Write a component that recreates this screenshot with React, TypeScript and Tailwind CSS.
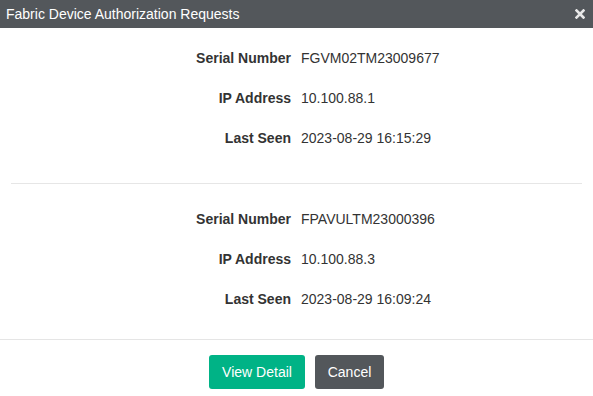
import React from 'react';

type Device = {
  serial: string;
  ip: string;
  lastSeen: string;
};

const devices: Device[] = [
  { serial: 'FGVM02TM23009677', ip: '10.100.88.1', lastSeen: '2023-08-29 16:15:29' },
  { serial: 'FPAVULTM23000396', ip: '10.100.88.3', lastSeen: '2023-08-29 16:09:24' },
];

function Row({ label, value }: { label: string; value: string }) {
  return (
    <div className="flex h-10 items-center">
      <div className="w-[291px] text-right font-bold text-[14px] text-[#333]">{label}</div>
      <div className="pl-[10px] text-[14px] text-[#333]">{value}</div>
    </div>
  );
}

export default function App() {
  return (
    <div
      className="flex h-[396px] w-[593px] flex-col bg-white"
      style={{ fontFamily: '"Liberation Sans", Arial, sans-serif' }}
    >
      <div className="flex h-[28px] shrink-0 items-center justify-between bg-[#53575b] pl-[6px] pr-[8px] text-white">
        <span className="text-[14px]">Fabric Device Authorization Requests</span>
        <svg width="10" height="10" viewBox="0 0 10 10">
          <path d="M1.5 1.5 L8.5 8.5 M8.5 1.5 L1.5 8.5" stroke="#e8e8e8" strokeWidth="2.6" strokeLinecap="square" />
        </svg>
      </div>

      <div className="flex-1">
        <div className="pt-[10px] pb-[25px]">
          <Row label="Serial Number" value={devices[0].serial} />
          <Row label="IP Address" value={devices[0].ip} />
          <Row label="Last Seen" value={devices[0].lastSeen} />
        </div>
        <div className="mx-[11px] h-px bg-[#e6e6e6]" />
        <div className="pt-[15px]">
          <Row label="Serial Number" value={devices[1].serial} />
          <Row label="IP Address" value={devices[1].ip} />
          <Row label="Last Seen" value={devices[1].lastSeen} />
        </div>
      </div>

      <div className="flex h-[57px] shrink-0 justify-center gap-[10px] border-t border-[#e5e5e5] pt-[15px]">
        <button className="h-[34px] w-[96px] rounded-[3px] bg-[#00b386] text-[14px] text-white">
          View Detail
        </button>
        <button className="h-[34px] w-[69px] rounded-[3px] bg-[#53575b] text-[14px] text-white">
          Cancel
        </button>
      </div>
    </div>
  );
}
